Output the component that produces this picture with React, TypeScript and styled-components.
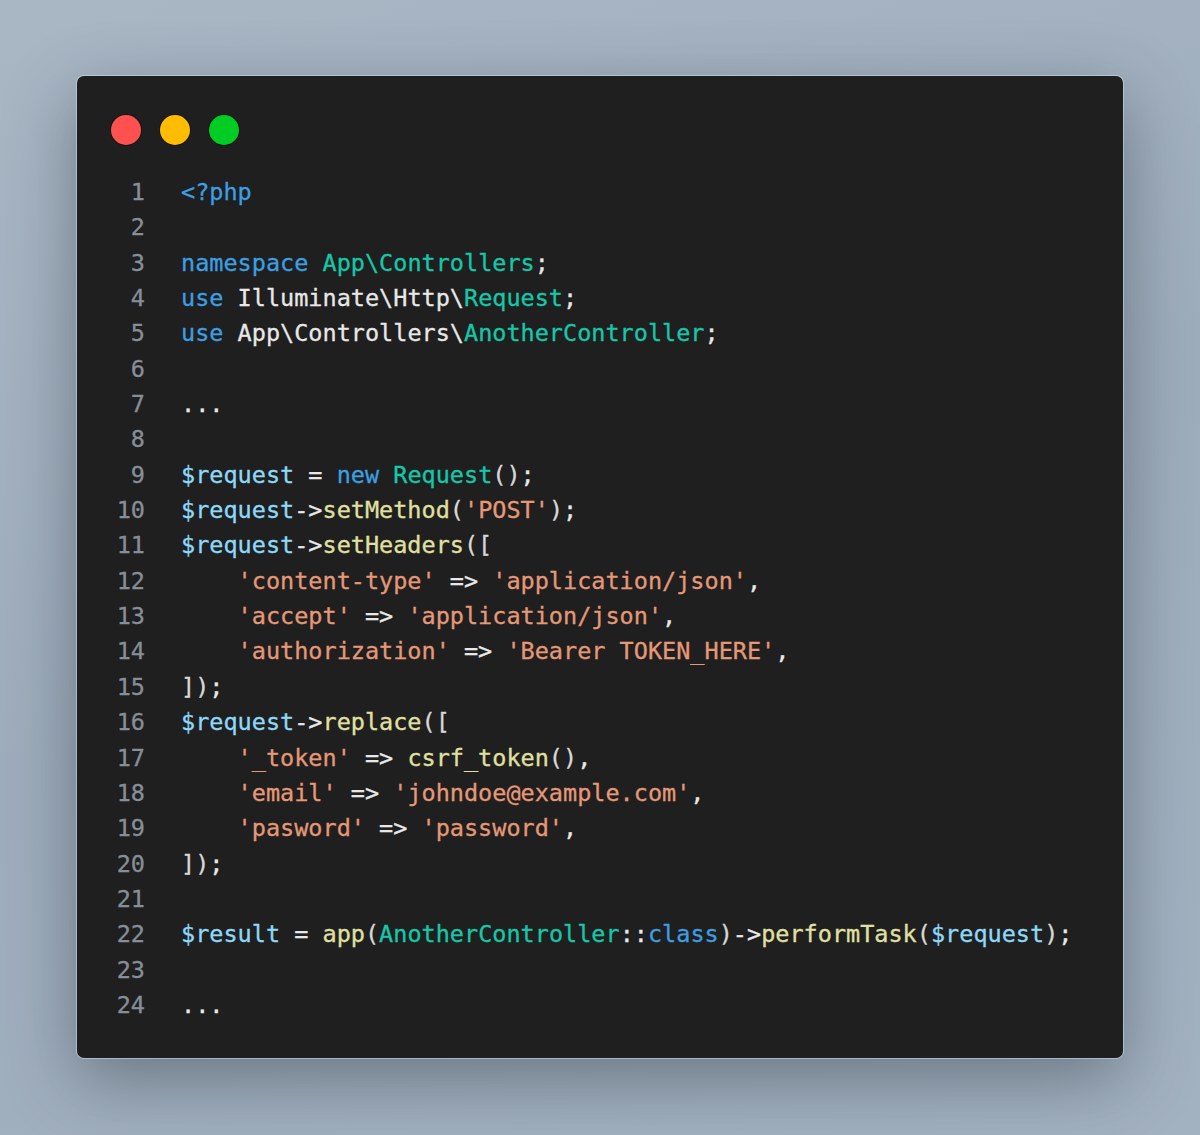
import React from "react";
import styled, { createGlobalStyle } from "styled-components";

const Global = createGlobalStyle`
  html, body { margin: 0; padding: 0; }
  body {
    background: linear-gradient(160deg, #a9b7c5 0%, #9eadbc 50%, #a3b2c1 100%);
    min-height: 1135px;
  }
`;

const Page = styled.div`
  box-sizing: border-box;
  width: 1200px;
  height: 1135px;
  padding: 76px 77px 0 77px;
  display: flex;
  justify-content: center;
  align-items: flex-start;
`;

const Window = styled.div`
  box-sizing: border-box;
  width: 1046px;
  height: 982px;
  background: #1f1f1f;
  border-radius: 7px;
  box-shadow: 0 0 0 1px rgba(210, 220, 230, 0.55), 0 22px 70px rgba(40, 50, 60, 0.45);
  padding: 39px 0 0 34px;
  display: flex;
  flex-direction: column;
`;

const Dots = styled.div`
  display: flex;
  gap: 19px;
  margin-bottom: 30px;
`;

const Dot = styled.span<{ $c: string }>`
  width: 30px;
  height: 30px;
  border-radius: 50%;
  background: ${(p) => p.$c};
  box-shadow: 0 0 0 1px rgba(0, 0, 0, 0.35);
`;

const Code = styled.div`
  font-family: "DejaVu Sans Mono", "Liberation Mono", monospace;
  font-size: 23.5px;
  line-height: 35.35px;
  color: #e6e6e6;
  -webkit-text-stroke: 0.3px currentColor;
`;

const Line = styled.div`
  display: flex;
  white-space: pre;
`;

const Num = styled.span`
  width: 34px;
  text-align: right;
  color: #868e98;
  margin-right: 36px;
  flex: none;
`;

const T = styled.span<{ $k?: string }>`
  color: ${(p) =>
    ({
      kw: "#3d9ee0",
      cls: "#16c7a9",
      v: "#8ed8f8",
      fn: "#e0e0a2",
      str: "#e49877",
      p: "#d8d8d8",
    } as Record<string, string>)[p.$k || ""] || "#e8e8e8"};
`;

type Tok = [string, string?];

const lines: Tok[][] = [
  [["<?php", "kw"]],
  [],
  [["namespace", "kw"], [" "], ["App\\Controllers", "cls"], [";"]],
  [["use", "kw"], [" Illuminate\\Http\\"], ["Request", "cls"], [";"]],
  [["use", "kw"], [" App\\Controllers\\"], ["AnotherController", "cls"], [";"]],
  [],
  [["..."]],
  [],
  [["$request", "v"], [" = "], ["new", "kw"], [" "], ["Request", "cls"], ["()", "p"], [";"]],
  [["$request", "v"], ["->"], ["setMethod", "fn"], ["(", "p"], ["'POST'", "str"], [")", "p"], [";"]],
  [["$request", "v"], ["->"], ["setHeaders", "fn"], ["([", "p"]],
  [["    "], ["'content-type'", "str"], [" => "], ["'application/json'", "str"], [","]],
  [["    "], ["'accept'", "str"], [" => "], ["'application/json'", "str"], [","]],
  [["    "], ["'authorization'", "str"], [" => "], ["'Bearer TOKEN_HERE'", "str"], [","]],
  [["])", "p"], [";"]],
  [["$request", "v"], ["->"], ["replace", "fn"], ["([", "p"]],
  [["    "], ["'_token'", "str"], [" => "], ["csrf_token", "fn"], ["()", "p"], [","]],
  [["    "], ["'email'", "str"], [" => "], ["'johndoe@example.com'", "str"], [","]],
  [["    "], ["'pasword'", "str"], [" => "], ["'password'", "str"], [","]],
  [["])", "p"], [";"]],
  [],
  [
    ["$result", "v"],
    [" = "],
    ["app", "fn"],
    ["(", "p"],
    ["AnotherController", "cls"],
    ["::"],
    ["class", "kw"],
    [")", "p"],
    ["->"],
    ["performTask", "fn"],
    ["(", "p"],
    ["$request", "v"],
    [")", "p"],
    [";"],
  ],
  [],
  [["..."]],
];

export default function App() {
  return (
    <>
      <Global />
      <Page>
        <Window>
          <Dots>
            <Dot $c="#ff5150" />
            <Dot $c="#ffbc00" />
            <Dot $c="#00cd24" />
          </Dots>
          <Code>
            {lines.map((toks, i) => (
              <Line key={i}>
                <Num>{i + 1}</Num>
                <span>
                  {toks.map(([text, k], j) => (
                    <T key={j} $k={k}>
                      {text}
                    </T>
                  ))}
                </span>
              </Line>
            ))}
          </Code>
        </Window>
      </Page>
    </>
  );
}
